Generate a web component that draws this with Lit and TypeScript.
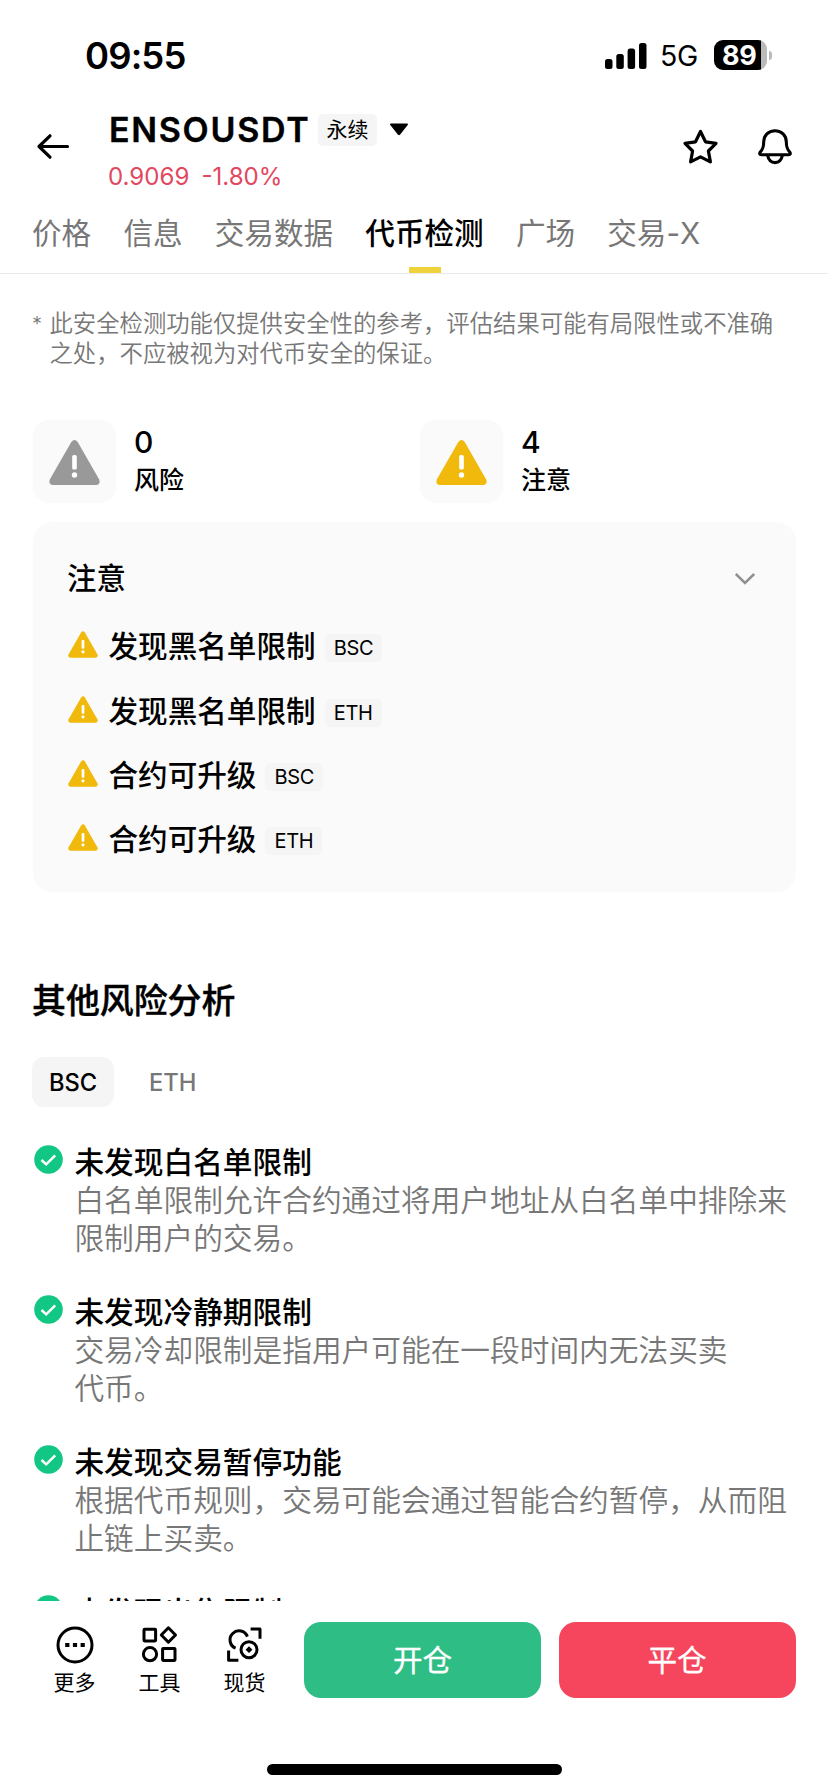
import { LitElement, html, css, svg } from "lit";
import { customElement, property } from "lit/decorators.js";
import { classMap } from "lit/directives/class-map.js";

@customElement("warning-icon")
class WarningIcon extends LitElement {
  static styles = css`
    :host { display: block; color: #f0b90b; }
    svg { display: block; width: 100%; height: 100%; }
  `;
  render() {
    return html`<svg viewBox="0 0 51 45">
      <path d="M22.3 1.9Q25.5-1.7 28.7 1.9L50.2 39.6Q51.8 44.6 47 45H4Q-.8 44.6 .8 39.6Z" fill="currentColor" />
      <rect x="23.2" y="15" width="4.6" height="14.6" rx="1.6" fill="#fff" />
      <circle cx="25.5" cy="35" r="2.7" fill="#fff" />
    </svg>`;
  }
}

@customElement("check-item")
class CheckItem extends LitElement {
  @property() heading = "";
  @property({ attribute: false }) lines: string[] = [];
  static styles = css`
    :host { display: flex; height: 150px; gap: 11px; padding-left: 2.4px; box-sizing: border-box; }
    .dot { width: 29px; height: 29px; flex: none; display: block; margin-top: 0; }
    .title { font-size: 29.7px; font-weight: 500; line-height: 38px; height: 38px; margin-top: -2.5px; color: #000; white-space: nowrap; }
    .desc { font-size: 29.7px; line-height: 38px; color: #777; font-weight: 350; white-space: nowrap; margin-top: 0.5px; }
  `;
  render() {
    return html`
      <svg class="dot" viewBox="0 0 29 29">
        <circle cx="14.5" cy="14.5" r="14.3" fill="#12c783" />
        <path d="M7.5 15l4.7 4.3 9-9" fill="none" stroke="#fff" stroke-width="2.5" />
      </svg>
      <div>
        <div class="title">${this.heading}</div>
        <div class="desc">${this.lines.map((l) => html`<div>${l}</div>`)}</div>
      </div>
    `;
  }
}

const TABS = ["价格", "信息", "交易数据", "代币检测", "广场", "交易-X"];
const WARNINGS = [
  ["发现黑名单限制", "BSC"],
  ["发现黑名单限制", "ETH"],
  ["合约可升级", "BSC"],
  ["合约可升级", "ETH"],
];
const CHECKS = [
  { heading: "未发现白名单限制", lines: ["白名单限制允许合约通过将用户地址从白名单中排除来", "限制用户的交易。"] },
  { heading: "未发现冷静期限制", lines: ["交易冷却限制是指用户可能在一段时间内无法买卖", "代币。"] },
  { heading: "未发现交易暂停功能", lines: ["根据代币规则，交易可能会通过智能合约暂停，从而阻", "止链上买卖。"] },
  { heading: "未发现出售限制", lines: [] },
];
const TOOLS = [
  {
    label: "更多",
    icon: svg`<circle cx="20" cy="20" r="17" /><path d="M10.2 20h4.2M17.9 20h4.2M25.6 20h4.2" stroke-width="4.2" />`,
  },
  {
    label: "工具",
    icon: svg`<rect x="4" y="4.3" width="11.6" height="11.6" rx=".6" /><path d="M28.4 2.8l7.1 7.2-7.1 7.2-7.1-7.2z" stroke-linejoin="round" /><circle cx="10" cy="29.2" r="6.6" /><rect x="22.6" y="23.4" width="12.4" height="12" rx=".6" />`,
  },
  {
    label: "现货",
    icon: svg`<path d="M25.6 4h9.4v9.8M3.6 25.6v9.6h9.8" stroke-linejoin="round" /><path d="M10.6 23.2A9 9 0 1 1 22.4 11.6" /><circle cx="24" cy="24.7" r="8" /><path d="M24 21.3l3.4 3.4-3.4 3.4-3.4-3.4z" fill="#000" stroke="none" />`,
  },
];

@customElement("app-root")
class AppRoot extends LitElement {
  static styles = css`
    :host {
      display: flex; flex-direction: column; width: 828px; height: 1792px; overflow: hidden; background: #fff; color: #000;
      font-family: Inter, "Noto Sans CJK SC", sans-serif; box-sizing: border-box;
    }
    * { box-sizing: border-box; }
    svg { display: block; flex: none; }
    .status { height: 96px; padding: 31px 55px 0 85px; display: flex; justify-content: space-between; align-items: flex-start; flex: none; }
    .time { font-size: 36.5px; line-height: 50px; font-weight: 600; letter-spacing: -0.9px; }
    .sys { display: flex; align-items: center; height: 50px; }
    .net { font-size: 28.5px; line-height: 50px; margin-left: 13px; width: 54px; letter-spacing: -0.3px; }
    .battery { display: flex; width: 59px; height: 30px; margin-top: -2px; }
    .cell { width: 53px; height: 30px; border-radius: 9px; background: linear-gradient(90deg, #000 47.5px, #bababa 47.5px); color: #fff;
      font-weight: 700; font-size: 27px; line-height: 31px; padding-left: 8px; letter-spacing: -0.4px; }
    .nub { width: 3px; height: 9px; background: #bababa; border-radius: 0 4px 4px 0; margin: 11px 0 0 2px; }

    .head { height: 107px; flex: none; display: flex; padding: 12px 34px 0 36px; }
    .back { margin-top: 21px; }
    .pair { margin-left: 37px; flex: 1; }
    .name { display: flex; align-items: center; height: 43px; }
    .sym { font-size: 34px; font-weight: 600; line-height: 44px; padding-top: 1px; width: 209px; white-space: nowrap; letter-spacing: 1.7px; -webkit-text-stroke: 0.4px #000; }
    .badge { width: 59px; height: 32px; border-radius: 5px; background: #f5f5f5; font-size: 21px; line-height: 32px; text-align: center; margin-top: 0; }
    .caret { margin-left: 12px; }
    .price { display: flex; gap: 12px; font-size: 24.1px; line-height: 30px; margin-top: 11px; margin-left: -1px; color: #e2485f; font-weight: 400; }
    .acts { display: flex; gap: 36px; margin-top: 18px; }

    .tabs { height: 71px; flex: none; display: flex; gap: 32.2px; padding: 11px 32px 0; border-bottom: 1px solid #eaeaea; font-size: 29.6px; line-height: 38px; color: #777; white-space: nowrap; }
    .tab { display: flex; flex-direction: column; align-items: center; height: 59px; justify-content: space-between; }
    .on { color: #000; font-weight: 500; }
    .on::after { content: ""; width: 32px; height: 6px; background: #f0d33c; }

    .content { height: 1327px; flex: none; overflow: hidden; padding: 35px 32px 0; }
    .note { display: flex; font-size: 23.35px; line-height: 30px; color: #777; font-weight: 350; white-space: nowrap; }
    .star { width: 17.5px; font-size: 20px; }
    .stats { display: grid; grid-template-columns: 387px 1fr; margin: 51px 0 0 1px; height: 83px; }
    .stat { display: flex; gap: 18px; }
    .tile { width: 83px; height: 83px; border-radius: 16px; background: #fafafa; display: flex; justify-content: center; padding-top: 20px; }
    .tile warning-icon { width: 51px; height: 45px; }
    .grey { color: #999; }
    .num { font-size: 30px; line-height: 36px; font-weight: 500; margin-top: 4px; }
    .lab { font-size: 25px; line-height: 36px; font-weight: 500; margin-top: 2px; }
    .card { margin: 19px 0 0 1px; width: 763px; height: 370px; border-radius: 20px; background: #fafafa; padding: 37px 41px 0 34px; }
    .ct { display: flex; justify-content: space-between; align-items: center; font-size: 29.4px; line-height: 40px; font-weight: 500; margin-bottom: 15px; }
    .row { display: flex; align-items: center; height: 64.4px; padding-left: 1px; }
    .row warning-icon { width: 30px; height: 27px; margin-top: -3px; }
    .rt { font-size: 29.6px; font-weight: 500; line-height: 40px; margin-left: 10.5px; }
    .chain { margin-left: 9px; height: 28px; border-radius: 5px; background: #f5f5f5; font-size: 20px; line-height: 28px; padding: 0 9px; margin-top: 4px; letter-spacing: -0.3px; }
    .h2 { font-size: 33.9px; font-weight: 500; line-height: 48px; margin-top: 85px; -webkit-text-stroke: 0.4px #000; }
    .chips { display: flex; gap: 18px; margin: 32px 0 38px; }
    .chip { height: 50px; border-radius: 12px; padding: 0 17px; font-size: 23.7px; line-height: 51px; font-weight: 500; color: #777; }
    .sel { background: #f5f5f5; color: #000; width: 82px; }

    .bar { flex: none; height: 97px; display: flex; padding: 21px 32px 0 32px; }
    .tool { width: 85px; display: flex; flex-direction: column; align-items: center; font-size: 21px; line-height: 30px; }
    .tool svg { margin-top: 3px; }
    .tl { margin-top: 3px; }
    .btn { width: 237px; height: 76px; border-radius: 17px; color: #fff; font-size: 29.6px; line-height: 76px; text-align: center; font-weight: 400; -webkit-text-stroke: 0.3px #fff; }
    .green { background: #2ebd85; margin-left: 17px; }
    .red { background: #f6465d; margin-left: 17.5px; }
    .home { flex: none; width: 295px; height: 11px; border-radius: 6px; background: #000; margin: 66px 0 0 267px; }
  `;

  render() {
    return html`
      <div class="status">
        <div class="time">09:55</div>
        <div class="sys">
          <svg width="42" height="26" viewBox="0 0 42 26">
            <rect x="0" y="16" width="7.5" height="10" rx="2.5" /><rect x="11.3" y="11" width="7.5" height="15" rx="2.5" />
            <rect x="22.6" y="5.5" width="7.5" height="20.5" rx="2.5" /><rect x="34" y="0" width="7.5" height="26" rx="2.5" />
          </svg>
          <div class="net">5G</div>
          <div class="battery"><div class="cell">89</div><div class="nub"></div></div>
        </div>
      </div>
      <div class="head">
        <svg class="back" width="36" height="36" viewBox="0 0 36 36" fill="none" stroke="#000" stroke-width="3.2" stroke-linecap="round" stroke-linejoin="round">
          <path d="M31.5 17.5H3M14 6.8L3 17.5l11 10.7" />
        </svg>
        <div class="pair">
          <div class="name">
            <div class="sym">ENSOUSDT</div>
            <div class="badge">永续</div>
            <svg class="caret" width="20" height="13" viewBox="0 0 20 13"><path d="M1.6.5h16.8q1.2.6.3 1.6L11 11.8q-1 .9-2 0L1.3 2.1q-.9-1 .3-1.6z" /></svg>
          </div>
          <div class="price"><span>0.9069</span><span>-1.80%</span></div>
        </div>
        <div class="acts">
          <svg width="40" height="42" viewBox="0 0 40 42" fill="none" stroke="#000" stroke-width="3.2" stroke-linejoin="round">
            <path d="M20.5 5.5l5 10.3 10.5 1.6-7.6 7.6 2 10.9-9.9-5-9.9 5 2-10.9-7.6-7.6 10.5-1.6z" />
          </svg>
          <svg width="38" height="42" viewBox="0 0 38 42" fill="none" stroke="#000" stroke-width="3.1" stroke-linejoin="round">
            <path d="M7.7 15.8C7.7 9.2 12.5 4.7 19 4.7S30.3 9.2 30.3 15.8c0 5.8 1 7.6 3.6 10.5q1.2 2.3-1.2 2.5H5.3q-2.4-.2-1.2-2.5c2.6-2.900 3.600-4.700 3.600-10.500z" />
            <path d="M11.5 29c1 5 4 7.600 7.500 7.600s6.500-2.600 7.500-7.600" />
          </svg>
        </div>
      </div>
      <div class="tabs">
        ${TABS.map((t, i) => html`<div class=${classMap({ tab: true, on: i === 3 })}>${t}</div>`)}
      </div>
      <div class="content">
        <div class="note">
          <div class="star">*</div>
          <div>此安全检测功能仅提供安全性的参考，评估结果可能有局限性或不准确<br />之处，不应被视为对代币安全的保证。</div>
        </div>
        <div class="stats">
          <div class="stat">
            <div class="tile"><warning-icon class="grey"></warning-icon></div>
            <div><div class="num">0</div><div class="lab">风险</div></div>
          </div>
          <div class="stat">
            <div class="tile"><warning-icon></warning-icon></div>
            <div><div class="num">4</div><div class="lab">注意</div></div>
          </div>
        </div>
        <div class="card">
          <div class="ct">
            <span>注意</span>
            <svg width="20" height="12" viewBox="0 0 20 12" fill="none" stroke="#909090" stroke-width="2.5"><path d="M.8 1L10 10 19.2 1" /></svg>
          </div>
          ${WARNINGS.map(([t, c]) => html`<div class="row"><warning-icon></warning-icon><div class="rt">${t}</div><div class="chain">${c}</div></div>`)}
        </div>
        <div class="h2">其他风险分析</div>
        <div class="chips"><div class="chip sel">BSC</div><div class="chip">ETH</div></div>
        ${CHECKS.map((c) => html`<check-item .heading=${c.heading} .lines=${c.lines}></check-item>`)}
      </div>
      <div class="bar">
        ${TOOLS.map(
          (t) => html`<div class="tool">
            <svg width="40" height="40" viewBox="0 0 40 40" fill="none" stroke="#000" stroke-width="3">${t.icon}</svg>
            <div class="tl">${t.label}</div>
          </div>`
        )}
        <div class="btn green">开仓</div>
        <div class="btn red">平仓</div>
      </div>
      <div class="home"></div>
    `;
  }
}
